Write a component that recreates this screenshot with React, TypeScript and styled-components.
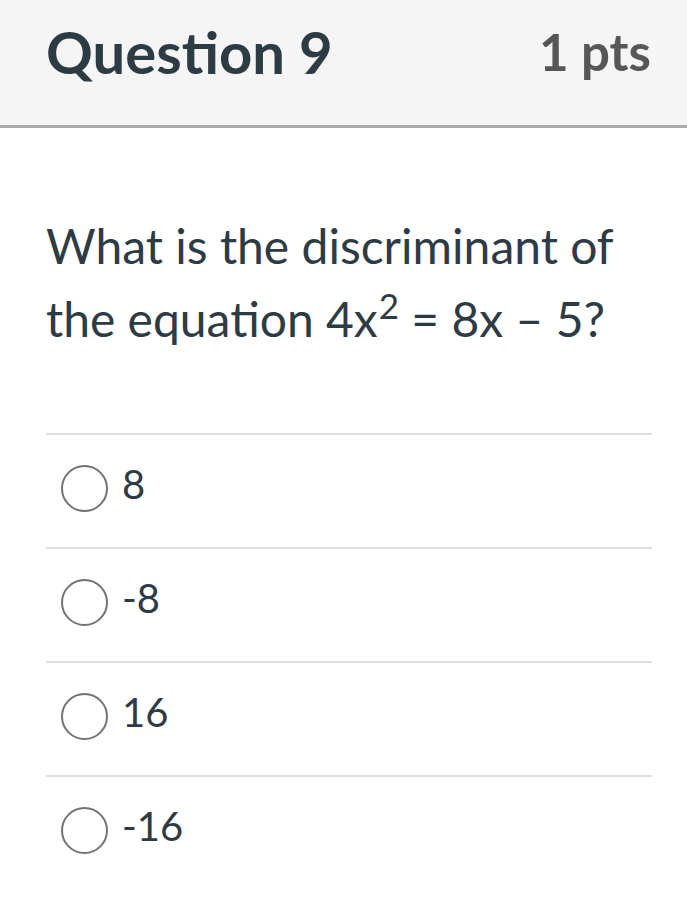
import React from "react";
import styled, { createGlobalStyle } from "styled-components";

const Global = createGlobalStyle`
  html, body { margin: 0; padding: 0; background: #ffffff; }
  body { font-family: Lato, "Noto Sans", sans-serif; }
`;

const Page = styled.div`
  width: 687px;
  min-height: 914px;
  background: #ffffff;
`;

const Header = styled.header`
  height: 128px;
  box-sizing: border-box;
  background: #f5f5f5;
  border-bottom: 3px solid #a9a9a9;
  display: flex;
  align-items: center;
  justify-content: space-between;
  padding: 0 36px 23px 46px;
`;

const Title = styled.h2`
  margin: 0;
  font-size: 58px;
  font-weight: 700;
  color: #2d3b45;
`;

const Points = styled.span`
  font-size: 51px;
  font-weight: 700;
  color: #575757;
`;

const Body = styled.div`
  padding: 81px 35px 0 46px;
`;

const QuestionText = styled.p`
  margin: 0;
  font-size: 48px;
  line-height: 73px;
  color: #2d3b45;
`;

const Sup = styled.sup`
  font-size: 35px;
  line-height: 0;
  vertical-align: 18px;
  margin-left: 1px;
`;

const Answers = styled.div`
  margin-top: 78px;
  display: flex;
  flex-direction: column;
`;

const Answer = styled.label`
  height: 114px;
  box-sizing: border-box;
  border-top: 2px solid #dedede;
  display: flex;
  align-items: center;
  padding: 0 0 6px 15px;
  gap: 14px;
`;

const Radio = styled.span`
  width: 47px;
  height: 47px;
  box-sizing: border-box;
  border-radius: 50%;
  border: 2.5px solid #737373;
  background: #fff;
  flex: none;
`;

const AnswerText = styled.span`
  font-size: 40px;
  color: #2d3b45;
  margin-bottom: 8px;
`;

const answers = ["8", "-8", "16", "-16"];

export default function App() {
  return (
    <Page>
      <Global />
      <Header>
        <Title>Question 9</Title>
        <Points>1 pts</Points>
      </Header>
      <Body>
        <QuestionText>
          What is the discriminant of the equation 4x<Sup>2</Sup> = 8x – 5?
        </QuestionText>
        <Answers>
          {answers.map((a) => (
            <Answer key={a}>
              <Radio />
              <AnswerText>{a}</AnswerText>
            </Answer>
          ))}
        </Answers>
      </Body>
    </Page>
  );
}
